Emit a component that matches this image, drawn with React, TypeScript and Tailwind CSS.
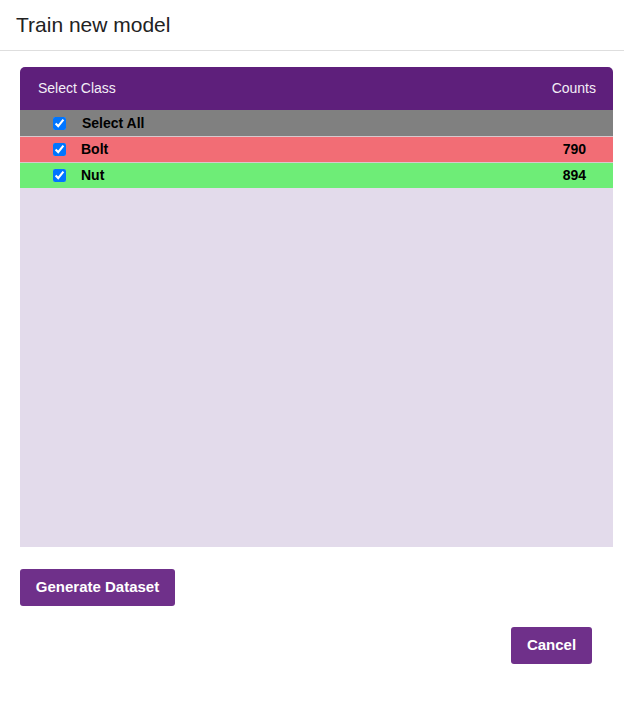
import React from "react";

const rows = [
  { label: "Select All", count: "", bg: "bg-[#808080]", pl: "pl-[16px]", h: "h-[27px] border-b" },
  { label: "Bolt", count: "790", bg: "bg-[#f26d75]", pl: "pl-[15px]", h: "h-[26px] border-b" },
  { label: "Nut", count: "894", bg: "bg-[#6eed77]", pl: "pl-[15px]", h: "h-[25px]" },
];

export default function App() {
  return (
    <div className="w-[624px] h-[708px] bg-white text-black" style={{ fontFamily: '"Liberation Sans", Arial, sans-serif' }}>
      <div className="h-[51px] border-b border-[#dedede] flex items-center pl-[16px]">
        <h1 className="text-[21px] leading-none text-[#222] -mt-[2px]">Train new model</h1>
      </div>
      <div className="pt-[16px] pl-[20px]">
        <div className="w-[593px]">
          <div className="h-[43px] bg-[#5e1f7b] rounded-t-[5px] flex items-center justify-between pl-[18px] pr-[17px] text-[14px] text-[#f3eef6]">
            <span>Select Class</span>
            <span>Counts</span>
          </div>
          {rows.map((r) => (
            <div key={r.label} className={`${r.h} ${r.bg} border-[#d8c8cc] flex items-center pr-[27px] text-[14px] font-bold`}>
              <input type="checkbox" checked readOnly className="ml-[33px] mr-0 w-[13px] h-[13px] accent-[#0075ff]" />
              <span className={`${r.pl} flex-1`}>{r.label}</span>
              <span>{r.count}</span>
            </div>
          ))}
          <div className="h-[359px] bg-[#e3dbeb]" />
        </div>
        <div className="mt-[22px]">
          <button className="w-[155px] h-[37px] bg-[#6f308a] rounded-[3px] text-white text-[15px] font-bold">Generate Dataset</button>
        </div>
        <div className="mt-[21px] flex justify-end pr-[32px]">
          <button className="w-[81px] h-[37px] bg-[#6f308a] rounded-[3px] text-white text-[15px] font-bold">Cancel</button>
        </div>
      </div>
    </div>
  );
}
